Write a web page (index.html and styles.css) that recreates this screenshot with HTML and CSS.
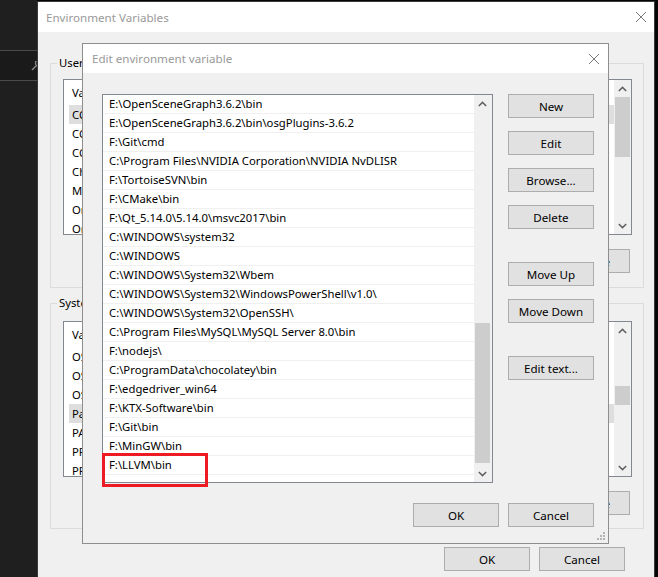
FILE: index.html
```html
<!DOCTYPE html>
<html lang="en">
<head>
    <meta charset="UTF-8">
    <meta name="viewport" content="width=device-width, initial-scale=1.0">
    <title>Edit environment variable</title>
    <link rel="stylesheet" href="styles.css">
</head>
<body>
<div class="desktop">
    <div class="sidebar">
        <div class="search">
            <svg class="search-icon" width="10" height="10" viewBox="0 0 10 10"><line x1="1" y1="9" x2="5" y2="5" stroke="#8a8a8a" stroke-width="1.4"/><circle cx="8" cy="2" r="3.5" fill="none" stroke="#8a8a8a" stroke-width="1.2"/></svg>
        </div>
    </div>

    <!-- parent dialog -->
    <div class="window env-window">
        <div class="titlebar">
            <span class="title">Environment Variables</span>
            <svg class="close" width="10" height="10" viewBox="0 0 10 10"><path d="M0 0L10 10M10 0L0 10" stroke="#7a7a7a" stroke-width="1"/></svg>
        </div>
        <div class="env-body">
            <fieldset class="group">
                <legend>User variables for admin</legend>
                <div class="listview">
                    <div class="lv-rows">
                        <div class="lv-head">Variable</div>
                        <div class="lv-row selected">COLCON_EXTENSION_BLOCKLIST</div>
                        <div class="lv-row">COLCON_HOME</div>
                        <div class="lv-row">COLCON_LOG_PATH</div>
                        <div class="lv-row">ChocolateyLastPathUpdate</div>
                        <div class="lv-row">MOZ_PLUGIN_PATH</div>
                        <div class="lv-row">OneDrive</div>
                        <div class="lv-row">OneDriveConsumer</div>
                    </div>
                    <div class="scrollbar">
                        <div class="sb-btn"><svg width="9" height="6" viewBox="0 0 9 6"><path d="M0.8 5L4.5 1.4L8.2 5" fill="none" stroke="#606060" stroke-width="1.5"/></svg></div>
                        <div class="sb-track"><div class="sb-thumb user-thumb"></div></div>
                        <div class="sb-btn"><svg width="9" height="6" viewBox="0 0 9 6"><path d="M0.8 1L4.5 4.6L8.2 1" fill="none" stroke="#606060" stroke-width="1.5"/></svg></div>
                    </div>
                </div>
                <div class="group-buttons">
                    <button class="btn">New...</button>
                    <button class="btn">Edit...</button>
                    <button class="btn">Delete</button>
                </div>
            </fieldset>

            <fieldset class="group group-system">
                <legend>System variables</legend>
                <div class="listview">
                    <div class="lv-rows">
                        <div class="lv-head">Variable</div>
                        <div class="lv-row">OS</div>
                        <div class="lv-row">OSG_FILE_PATH</div>
                        <div class="lv-row">OSG_NOTIFY_LEVEL</div>
                        <div class="lv-row selected">Path</div>
                        <div class="lv-row">PATHEXT</div>
                        <div class="lv-row">PROCESSOR_ARCHITECTURE</div>
                        <div class="lv-row">PROCESSOR_IDENTIFIER</div>
                    </div>
                    <div class="scrollbar">
                        <div class="sb-btn"><svg width="9" height="6" viewBox="0 0 9 6"><path d="M0.8 5L4.5 1.4L8.2 5" fill="none" stroke="#606060" stroke-width="1.5"/></svg></div>
                        <div class="sb-track"><div class="sb-thumb sys-thumb"></div></div>
                        <div class="sb-btn"><svg width="9" height="6" viewBox="0 0 9 6"><path d="M0.8 1L4.5 4.6L8.2 1" fill="none" stroke="#606060" stroke-width="1.5"/></svg></div>
                    </div>
                </div>
                <div class="group-buttons">
                    <button class="btn">New...</button>
                    <button class="btn">Edit...</button>
                    <button class="btn">Delete</button>
                </div>
            </fieldset>

            <div class="dialog-buttons env-buttons">
                <button class="btn">OK</button>
                <button class="btn">Cancel</button>
            </div>
        </div>
    </div>

    <!-- child dialog -->
    <div class="window edit-window">
        <div class="titlebar">
            <span class="title">Edit environment variable</span>
            <svg class="close" width="10" height="10" viewBox="0 0 10 10"><path d="M0 0L10 10M10 0L0 10" stroke="#7a7a7a" stroke-width="1"/></svg>
        </div>
        <div class="edit-body">
            <div class="listbox">
                <div class="path-rows">
                    <div class="path-row">E:\OpenSceneGraph3.6.2\bin</div>
                    <div class="path-row">E:\OpenSceneGraph3.6.2\bin\osgPlugins-3.6.2</div>
                    <div class="path-row">F:\Git\cmd</div>
                    <div class="path-row">C:\Program Files\NVIDIA Corporation\NVIDIA NvDLISR</div>
                    <div class="path-row">F:\TortoiseSVN\bin</div>
                    <div class="path-row">F:\CMake\bin</div>
                    <div class="path-row">F:\Qt_5.14.0\5.14.0\msvc2017\bin</div>
                    <div class="path-row">C:\WINDOWS\system32</div>
                    <div class="path-row">C:\WINDOWS</div>
                    <div class="path-row">C:\WINDOWS\System32\Wbem</div>
                    <div class="path-row">C:\WINDOWS\System32\WindowsPowerShell\v1.0\</div>
                    <div class="path-row">C:\WINDOWS\System32\OpenSSH\</div>
                    <div class="path-row">C:\Program Files\MySQL\MySQL Server 8.0\bin</div>
                    <div class="path-row">F:\nodejs\</div>
                    <div class="path-row">C:\ProgramData\chocolatey\bin</div>
                    <div class="path-row">F:\edgedriver_win64</div>
                    <div class="path-row">F:\KTX-Software\bin</div>
                    <div class="path-row">F:\Git\bin</div>
                    <div class="path-row">F:\MinGW\bin</div>
                    <div class="path-row">F:\LLVM\bin</div>
                </div>
                <div class="scrollbar">
                    <div class="sb-btn"><svg width="9" height="6" viewBox="0 0 9 6"><path d="M0.8 5L4.5 1.4L8.2 5" fill="none" stroke="#606060" stroke-width="1.5"/></svg></div>
                    <div class="sb-track"><div class="sb-thumb path-thumb"></div></div>
                    <div class="sb-btn"><svg width="9" height="6" viewBox="0 0 9 6"><path d="M0.8 1L4.5 4.6L8.2 1" fill="none" stroke="#606060" stroke-width="1.5"/></svg></div>
                </div>
                <div class="mark"></div>
            </div>
            <div class="side-buttons">
                <button class="btn">New</button>
                <button class="btn">Edit</button>
                <button class="btn">Browse...</button>
                <button class="btn">Delete</button>
                <button class="btn btn-sep">Move Up</button>
                <button class="btn">Move Down</button>
                <button class="btn btn-sep">Edit text...</button>
            </div>
            <div class="dialog-buttons edit-buttons">
                <button class="btn">OK</button>
                <button class="btn">Cancel</button>
            </div>
        </div>
        <svg class="grip" width="8" height="8" viewBox="0 0 8 8" fill="#b4b4b4"><rect x="6" y="0" width="2" height="2"/><rect x="3" y="3" width="2" height="2"/><rect x="6" y="3" width="2" height="2"/><rect x="0" y="6" width="2" height="2"/><rect x="3" y="6" width="2" height="2"/><rect x="6" y="6" width="2" height="2"/></svg>
    </div>
</div>
</body>
</html>
```

FILE: styles.css
```css
* {
    box-sizing: border-box;
}
html, body {
    margin: 0;
    padding: 0;
    background: #000;
}
body {
    font-family: "Noto Sans", "Open Sans", sans-serif;
    font-size: 11.3px;
    color: #000;
}
.desktop {
    position: relative;
    width: 658px;
    height: 577px;
    overflow: hidden;
    background: #050505;
}
.sidebar {
    width: 37px;
    height: 100%;
    background: #1f1f1f;
    padding-top: 50px;
}
.search {
    position: relative;
    height: 31px;
    background: #1a1a1a;
    border-top: 1px solid #4b4b4b;
    border-bottom: 1px solid #4b4b4b;
}
.search-icon {
    position: absolute;
    left: 31px;
    top: 10px;
}

/* windows */
.window {
    position: absolute;
    background: #f0f0f0;
}
.env-window {
    left: 37px;
    top: 1px;
    width: 618px;
    height: 600px;
    border: 1px solid #3a3a3a;
}
.edit-window {
    left: 82px;
    top: 43px;
    width: 527px;
    height: 501px;
    border: 1px solid #8e8e8e;
}
.titlebar {
    display: flex;
    align-items: center;
    justify-content: space-between;
    background: #fff;
    color: #999;
    font-size: 11.6px;
}
.env-window .titlebar {
    height: 30px;
    padding: 0 8px 0 8px;
}
.edit-window .titlebar {
    height: 29px;
    padding: 0 9px 0 9px;
}

/* group boxes */
.env-body {
    padding: 23px 10px 0 12px;
}
.group {
    margin: 0;
    min-width: 0;
    border: 1px solid #dcdcdc;
    padding: 8px 11px 14px 12px;
}
.group legend {
    padding: 0 2px;
    margin-left: -6px;
    line-height: 16px;
}
.group-system {
    margin-top: 7px;
    padding-top: 10px;
    padding-bottom: 13px;
}
.listview {
    display: flex;
    height: 156px;
    background: #fff;
    border: 1px solid #828790;
}
.lv-rows {
    flex: 1;
    overflow: hidden;
    white-space: nowrap;
}
.lv-head {
    height: 25px;
    line-height: 25px;
    padding-left: 8px;
}
.lv-row {
    height: 19px;
    line-height: 19px;
    margin-left: 5px;
    padding-left: 3px;
}
.lv-row.selected {
    background: #dedede;
}
.group-buttons {
    display: flex;
    justify-content: flex-end;
    gap: 9px;
    margin-top: 14px;
    padding-right: 2px;
}
.group-buttons .btn {
    width: 75px;
}

/* scrollbars */
.scrollbar {
    display: flex;
    flex-direction: column;
    width: 17px;
    background: #f0f0f0;
}
.sb-btn {
    height: 17px;
    display: flex;
    align-items: center;
    justify-content: center;
}
.sb-track {
    flex: 1;
}
.sb-thumb {
    margin: 0 1px;
    background: #cdcdcd;
}
.user-thumb {
    height: 60px;
}
.sys-thumb {
    margin-top: 47px;
    height: 19px;
}
.path-thumb {
    margin-top: 211px;
    height: 140px;
}

/* buttons */
.btn {
    width: 86px;
    height: 24px;
    padding: 0;
    background: #e1e1e1;
    border: 1px solid #adadad;
    border-radius: 0;
    font-family: inherit;
    font-size: 11.6px;
    color: #000;
}
.dialog-buttons {
    display: flex;
    justify-content: flex-end;
    gap: 9px;
}
.env-buttons {
    margin-top: 18px;
    padding-right: 19px;
}

/* edit dialog */
.edit-body {
    display: grid;
    grid-template-columns: 391px 86px;
    column-gap: 15px;
    padding: 21px 14px 16px 19px;
}
.listbox {
    position: relative;
    display: flex;
    height: 389px;
    background: #fff;
    border: 1px solid #828790;
}
.path-rows {
    flex: 1;
    overflow: hidden;
    white-space: nowrap;
}
.path-row {
    height: 19px;
    line-height: 18px;
    padding-left: 6px;
    border-bottom: 1px solid #f0f0f0;
}
.listbox .scrollbar {
    width: 18px;
    padding-right: 1px;
}
.mark {
    position: absolute;
    left: -1px;
    top: 358px;
    width: 106px;
    height: 34px;
    border: 3px solid #ed1c24;
}
.side-buttons {
    display: flex;
    flex-direction: column;
    gap: 13px;
}
.btn-sep {
    margin-top: 20px;
}
.edit-buttons {
    grid-column: 1 / -1;
    margin-top: 20px;
}
.grip {
    position: absolute;
    right: 3px;
    bottom: 3px;
}
```
